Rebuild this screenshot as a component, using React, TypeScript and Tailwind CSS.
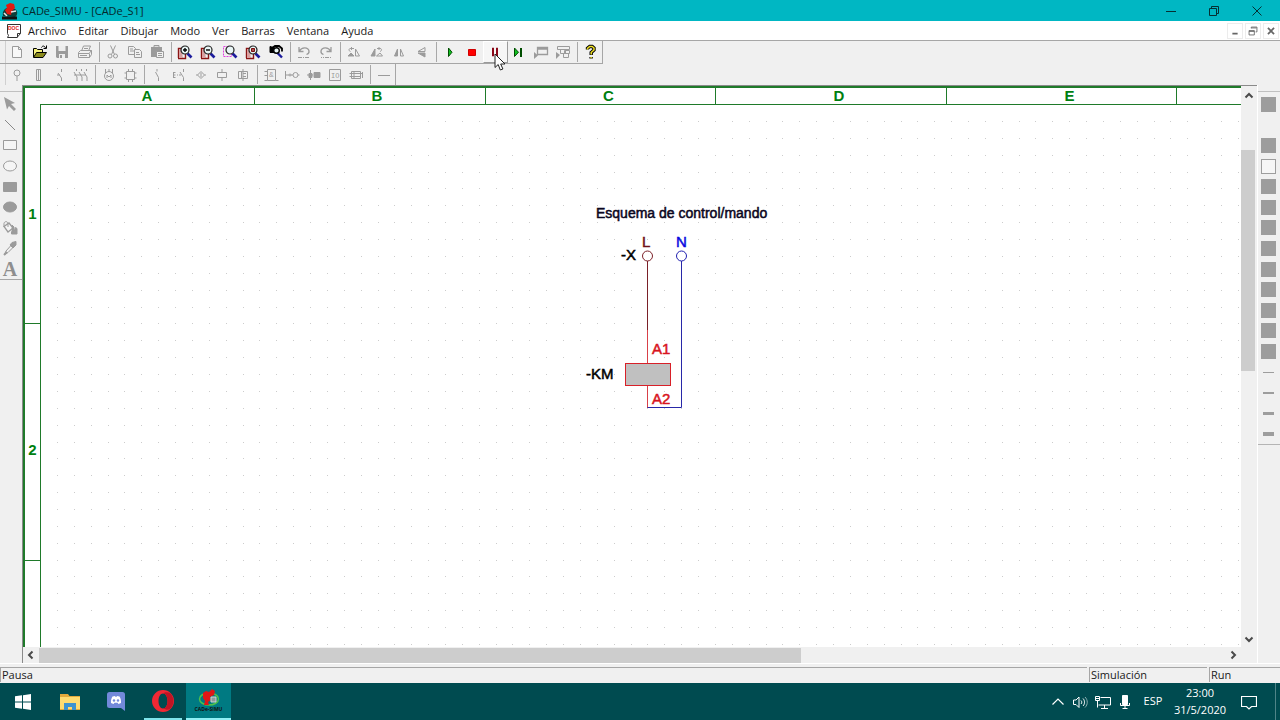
import type { ReactNode } from "react";

const menus = ["Archivo", "Editar", "Dibujar", "Modo", "Ver", "Barras", "Ventana", "Ayuda"];

const GREY = "#9b9b9b";

function Icon({ children, stroke = GREY, size = 16 }: { children: ReactNode; stroke?: string; size?: number }) {
    return (
        <svg
            width={size}
            height={size}
            viewBox="0 0 16 16"
            fill="none"
            stroke={stroke}
            strokeWidth="1"
            className="shrink-0"
            aria-hidden="true"
        >
            {children}
        </svg>
    );
}

function ZoomIcon({ door, children }: { door?: boolean; children?: ReactNode }) {
    return (
        <Icon stroke="#000">
            {door && <path d="M1.5 14V4.5h5M1 14.5h7.5V9M4.5 14V8" stroke="#8a1414" strokeWidth="1.4" />}
            {door && <path d="M2 5h3v9H2z" fill="#d9a0a0" stroke="none" />}
            {!door && <path d="M1.5 2.5h8v10h-8z" stroke="#e040e0" strokeDasharray="2 1" />}
            <path d="M10.5 9.5l4 4" stroke="#1c1c9c" strokeWidth="2.6" />
            <circle cx="8" cy="6" r="4" fill="#e8f6f6" stroke="#222" strokeWidth="1.2" />
            {children}
        </Icon>
    );
}

const fileTools = [
    {
        label: "Nuevo",
        icon: <Icon><path d="M3.5 2.5h6l3 3v8h-9zM9.5 2.5v3h3" fill="#f8f8f8" /></Icon>,
    },
    {
        label: "Abrir",
        icon: (
            <Icon stroke="#000">
                <path d="M1.5 13V4.5h3l1 1h5v3" fill="#f3ef7a" />
                <path d="M1.5 13.5l3-5h10l-3.5 5z" fill="#8b8b1c" />
                <path d="M9.5 3.5c1-2 3-2 4 .5M14.5 1.5v3h-3" />
            </Icon>
        ),
    },
    {
        label: "Guardar",
        icon: (
            <Icon>
                <path d="M2 2h12v12H3l-1-1z" fill={GREY} stroke="none" />
                <path d="M4.5 2h7v5h-7zM5 10h6v4H5z" fill="#eee" stroke="none" />
                <path d="M6 11h2v3H6z" fill={GREY} stroke="none" />
            </Icon>
        ),
    },
    {
        label: "Imprimir",
        icon: (
            <Icon>
                <path d="M4.5 7l2-5h7l-2 5M1.5 8.5l2-2h11v4l-2 3h-11zM1.5 9.5h10.5l2.5-3M12.5 9.5v4M3 11.5h7M7 4.5h4" />
            </Icon>
        ),
    },
];

const editTools = [
    {
        label: "Cortar",
        icon: (
            <Icon>
                <path d="M5.5 1.5l4 9M10.5 1.5l-4 9" />
                <circle cx="5" cy="12" r="2" />
                <circle cx="10.5" cy="12" r="2" />
            </Icon>
        ),
    },
    {
        label: "Copiar",
        icon: (
            <Icon>
                <path d="M1.5 2.5h5l2 2v6h-7zM3 5h3M3 7h4" />
                <path d="M7.5 5.5h5l2 2v6h-7z" fill="#f0f0f0" />
                <path d="M9 8.5h3M9 10.5h4" />
            </Icon>
        ),
    },
    {
        label: "Pegar",
        icon: (
            <Icon>
                <path d="M2 3h11v10H2z" fill={GREY} stroke="none" />
                <path d="M5 1.5h5v2H5z" fill="#ddd" />
                <path d="M7.5 7.5h7v6h-7z" fill="#f0f0f0" />
                <path d="M9 9.5h4M9 11.5h4" />
            </Icon>
        ),
    },
];

const zoomTools = [
    { label: "Acercar", icon: <ZoomIcon door><path d="M6 6h4M8 4v4" strokeWidth="1.4" /></ZoomIcon> },
    { label: "Alejar", icon: <ZoomIcon door><path d="M6 6h4" strokeWidth="1.4" /></ZoomIcon> },
    { label: "Zoom ventana", icon: <ZoomIcon /> },
    {
        label: "Zoom hoja",
        icon: <ZoomIcon door><path d="M6.5 4.5h3v3h-3z" fill="#b05050" stroke="#7a1010" /></ZoomIcon>,
    },
    {
        label: "Zoom anterior",
        icon: (
            <Icon stroke="#000">
                <path d="M9.5 9l4.5 4.500" stroke="#1c1c9c" strokeWidth="2.4" />
                <path d="M2 2.500v6h5L5 6.500l2-2.500z" fill="#000" />
                <path d="M4 4l3-2h4l3 2.500v3" strokeWidth="1.800" />
                <circle cx="8.500" cy="6.500" r="2.800" fill="#e8f6f6" strokeWidth="1.400" />
            </Icon>
        ),
    },
];

const undoTools = [
    {
        label: "Deshacer",
        icon: <Icon><path d="M3 3v4.500h4.500M3.500 7c2-4 8.500-4.500 9.500 0 .3 2-1 3-2.500 3.500" strokeWidth="1.300" /><path d="M2 13.500h11" strokeDasharray="4 1 1 1" /></Icon>,
    },
    {
        label: "Rehacer",
        icon: <Icon><path d="M13 3v4.500H8.500M12.500 7c-2-4-8.500-4.500-9.500 0-.3 2 1 3 2.500 3.500" strokeWidth="1.300" /><path d="M3 13.500h11" strokeDasharray="1 1 1 1 4 1" /></Icon>,
    },
];

const rotateTools = [
    {
        label: "Girar izquierda",
        icon: <Icon><path d="M9.500 12V5l4 7z" /><path d="M2 12h6L5 9z" fill={GREY} /><path d="M8 4.500H4.500c-2 0-2 2.500 0 3M6 3L4.500 4.500 6 6" /></Icon>,
    },
    {
        label: "Girar derecha",
        icon: <Icon><path d="M6 12V5l-4 7z" fill={GREY} /><path d="M7.500 12h6L11 9z" /><path d="M8 4.500h3c2 0 2 2.500 0 3M9.500 3L11 4.500 9.500 6" /></Icon>,
    },
    {
        label: "Simetría horizontal",
        icon: <Icon><path d="M6.500 12V5l-3 7z" fill={GREY} /><path d="M9.500 12V5l3 7z" /></Icon>,
    },
    {
        label: "Simetría vertical",
        icon: <Icon><path d="M11 7.500V3.500l-7 4z" /><path d="M11 9v4L4 9z" fill={GREY} /></Icon>,
    },
];

const windowTools = [
    {
        label: "Ventana de simulación",
        icon: <Icon><path d="M4.500 3.500h10v7h-10zM4 5h11" strokeWidth="1.300" /><path d="M1 8l4 3.500L1 15z" fill={GREY} stroke="none" /></Icon>,
    },
    {
        label: "Ventanas en cascada",
        icon: <Icon><path d="M2.500 2.500h12v3h-12zM5.500 5.500h5v4h-5zM9.500 6.500h5v3h-5zM8.500 9.500h5v4h-5z" /><path d="M1 8l4 3-4 4z" fill={GREY} stroke="none" /></Icon>,
    },
];

const symbolGroups = [
    {
        width: "w-[86px]",
        tools: [
            { label: "Alimentación", icon: <Icon><circle cx="8" cy="6" r="3" /><path d="M8 9v5" /></Icon> },
            { label: "Fusible", icon: <Icon><path d="M6.500 2.500h4v11h-4zM8.500 2v12" /></Icon> },
            { label: "Interruptor", icon: <Icon><path d="M9.500 2v3M6 6l3.500 5v3M5 8h3" /></Icon> },
            { label: "Contactos de potencia", icon: <Icon><path d="M3.500 2v2M1 5l3 5v4M8.500 2v2M6 5l3 5v4M13.500 2v2M11 5l3 5v4M1 8h12" /></Icon> },
        ],
    },
    {
        width: "w-[43px]",
        tools: [
            { label: "Motor", icon: <Icon><circle cx="8" cy="9" r="4.500" /><path d="M4.500 2v4M8 2v2.500M11.500 2v4M6 11V8l2 2 2-2v3" /></Icon> },
            { label: "Electrónica", icon: <Icon><path d="M4.500 4.500h8v8h-8zM6.500 2v2.500M10.500 2v2.500M6.500 12.500V15M10.500 12.500V15M2.500 6h2M2.500 11h2M12.500 6h2M12.500 11h2" /></Icon> },
        ],
    },
    {
        width: "w-[107px]",
        tools: [
            { label: "Contacto", icon: <Icon><path d="M8.500 14v-3.500L5.500 5M7 2v2.500" /></Icon> },
            { label: "Pulsador", icon: <Icon><path d="M12.500 14v-3.500L9 5M12.500 2v3M2.500 5.500v5M2 5.500h2.500M2 8h2.500M6 8h1M8 8h2M2 10.500h2.500" /></Icon> },
            { label: "Sensor", icon: <Icon><path d="M8 4.500L11.500 8 8 11.500 4.500 8zM3 8h1.500M11.500 8H13M8 6v4" /></Icon> },
            { label: "Bobina", icon: <Icon><path d="M3.500 5.500h9v5h-9zM8 2v3.500M8 10.500V14" /></Icon> },
            { label: "Bobina temporizada", icon: <Icon><path d="M3.500 4.500h9v7h-9zM6.500 4.500v7M8 2v12M8 6.500h3M8 9.500h3" /></Icon> },
        ],
    },
    {
        width: "w-[107px]",
        tools: [
            {
                label: "Puertas lógicas",
                icon: (
                    <Icon>
                        <path d="M4.500 2.500h8v11h-8zM1.500 4.500h3M1.500 8.500h3M1.500 13.500h3M12.500 13.500h3" />
                        <text x="6" y="10" fontSize="7" fill={GREY} stroke="none" fontFamily="Liberation Sans, sans-serif">&amp;</text>
                    </Icon>
                ),
            },
            { label: "Conector", icon: <Icon><circle cx="11.500" cy="8" r="2.500" /><circle cx="6" cy="8" r="1" /><path d="M1.500 4v8M1.500 8H5M7 8h2M14 8h1.500" /></Icon> },
            { label: "Válvula", icon: <Icon><path d="M1 8h6M4.500 3v10" /><path d="M3 6.500h3v4H3zM8 5.500h6v5H8z" fill={GREY} /></Icon> },
            {
                label: "Entradas y salidas",
                icon: (
                    <Icon>
                        <path d="M2.500 2.500h11v11h-11z" />
                        <text x="4" y="11" fontSize="7" fill={GREY} stroke="none" fontFamily="Liberation Mono, monospace">IO</text>
                    </Icon>
                ),
            },
            { label: "Cilindro", icon: <Icon><path d="M3.500 4.500h9v7h-9zM1.500 6.500h13M1.500 9.500h11M14.500 5v6M6 4.500v7" /></Icon> },
        ],
    },
    {
        width: "w-[22px]",
        tools: [{ label: "Cable", icon: <Icon><path d="M2 8.500h12" /></Icon> }],
    },
];

const drawTools = [
    { label: "Seleccionar", icon: <Icon><path d="M2 1l11 6-4 1 5 5-2 2-5-5-2 3.500z" fill={GREY} stroke="none" /></Icon> },
    { label: "Línea", icon: <Icon stroke="#888"><path d="M3 3l10 10" /></Icon> },
    { label: "Rectángulo", icon: <Icon><path d="M1.500 3.500h13v9h-13z" fill="#f5f5f5" /></Icon> },
    { label: "Elipse", icon: <Icon><ellipse cx="8" cy="8" rx="6.500" ry="5" fill="#f5f5f5" /></Icon> },
    { label: "Rectángulo relleno", icon: <Icon><path d="M1.500 3.500h13v9h-13z" fill={GREY} /></Icon> },
    { label: "Elipse rellena", icon: <Icon><ellipse cx="8" cy="8" rx="6.500" ry="5" fill={GREY} /></Icon> },
    {
        label: "Color de relleno",
        icon: (
            <Icon>
                <path d="M2 6.500l5-3.500 4 5-5 4z" fill="#f5f5f5" strokeWidth="1.300" />
                <path d="M2 7V3.500C2.500 1 5.500 1 6 3.500V7" />
                <path d="M10 5l2 2v5l1.500-4.500 1.500 1V14H9.500v-2.500" fill={GREY} />
            </Icon>
        ),
    },
    {
        label: "Color de línea",
        icon: <Icon><path d="M10 2.500l4-1v3.500l-3 3-3-3z" fill={GREY} /><path d="M8.500 6L4 11l-1.500 3.500L6 12.500 10.500 8" /><path d="M2 15l3-3" strokeWidth="2" /></Icon>,
    },
    { label: "Texto", text: "A" },
];

const swatches = [
    "solid", "none", "solid", "open", "solid", "solid", "solid", "solid", "solid",
    "solid", "solid", "solid", "solid", "line1", "line2", "line3", "line4",
];

const swatchStyles: Record<string, string> = {
    none: "size-[15px]",
    solid: "size-[15px] bg-[#9d9d9d]",
    open: "size-[15px] border border-[#9d9d9d] bg-[#f6f6f6]",
    line1: "w-[11px] h-px bg-[#9d9d9d]",
    line2: "w-[11px] h-[2px] bg-[#9d9d9d]",
    line3: "w-[11px] h-[3px] bg-[#9d9d9d]",
    line4: "w-[11px] h-1 bg-[#9d9d9d]",
};

// Sheet zones
const columns = [
    { name: "A", style: "w-[215px]" },
    { name: "B", style: "w-[231px] pl-3.5" },
    { name: "C", style: "w-[230px] pl-4" },
    { name: "D", style: "w-[231px] pl-4" },
    { name: "E", style: "w-[230px] pl-4" },
];

// Snap grid, one path so the DOM stays small
const gridStep = 16.87;
let gridPath = "";
for (let row = 0; row < 60; row++) {
    for (let col = 0; col < 150; col++) {
        gridPath += `M${Math.round(16 + col * gridStep)} ${Math.round(16 + row * gridStep)}h1v1h-1z`;
    }
}

function ToolButton({ label, children }: { label: string; children: ReactNode }) {
    return (
        <button type="button" aria-label={label} className="flex-1 flex items-center justify-center">
            {children}
        </button>
    );
}

function Separator() {
    return (
        <div className="w-1.5 flex justify-center py-px">
            <div className="w-px bg-[#a8a8a8]" />
        </div>
    );
}

function ToolGroup({ width, tools }: { width: string; tools: { label: string; icon: ReactNode }[] }) {
    return (
        <div className={`flex ${width}`}>
            {tools.map((tool) => (
                <ToolButton key={tool.label} label={tool.label}>{tool.icon}</ToolButton>
            ))}
        </div>
    );
}

function TitleBar() {
    return (
        <header className="h-[21px] shrink-0 flex items-center pr-0.5 bg-[#00b7c3] text-[#06282b]">
            <svg width="18" height="18" viewBox="0 0 18 18" className="ml-px mr-[3px]" aria-hidden="true">
                <path d="M2 14c-1-4 1-7 4-8l8 1c3 2 3 6 0 8z" fill="#0d3f3a" />
                <path d="M5 3l4-2 4 1 1 4-3 3-1 4-4-1-2-4 2-2z" fill="#e01b12" />
                <path d="M10 10l5-1M3 11l3 3" stroke="#e8e8e8" strokeWidth="1.5" />
                <path d="M1 16h15" stroke="#111" strokeWidth="3" />
            </svg>
            <h1 className="flex-1">CADe_SIMU - [CADe_S1]</h1>
            <button type="button" aria-label="Minimizar" className="w-[43px] h-full flex items-center justify-center">
                <Icon stroke="#053033"><path d="M3 8.5h10" /></Icon>
            </button>
            <button type="button" aria-label="Restaurar" className="w-[43px] h-full flex items-center justify-center">
                <Icon stroke="#053033"><path d="M3.500 5.500h7v7h-7zM5.500 5.500v-2h7v7h-2" /></Icon>
            </button>
            <button type="button" aria-label="Cerrar" className="w-[43px] h-full flex items-center justify-center">
                <Icon stroke="#053033"><path d="M3.500 3.500l9 9M12.500 3.500l-9 9" /></Icon>
            </button>
        </header>
    );
}

function MenuBar() {
    return (
        <nav className="h-5 shrink-0 flex items-center bg-white border-b border-[#a6a6a6]">
            <svg width="16" height="16" viewBox="0 0 16 16" className="ml-1.5 mr-1.5" aria-hidden="true">
                <path d="M1.500 1.500h13v9l-3.500 4h-9.500l1-2-1-2z" fill="#fff" stroke="#333" />
                <path d="M14.500 10.500h-3v4" fill="none" stroke="#333" />
                <text x="2" y="7" fontSize="5" fontWeight="bold" fill="#d22" fontFamily="Liberation Sans, sans-serif">DOC</text>
            </svg>
            <div className="flex-1 flex gap-3">
                {menus.map((menu) => (
                    <button key={menu} type="button">{menu}</button>
                ))}
            </div>
            <div className="flex gap-0.5 pr-px">
                <button type="button" aria-label="Minimizar documento" className="size-4 border border-[#ececec]">
                    <Icon size={14} stroke="#666"><path d="M5 11h6" strokeWidth="2" /></Icon>
                </button>
                <button type="button" aria-label="Restaurar documento" className="size-4 border border-[#ececec]">
                    <Icon size={14} stroke="#666"><path d="M3.500 7.500h6v5h-6zM6 5V3.500h6.500V9H11M3.500 8.500h6M6 4.500h6" /></Icon>
                </button>
                <button type="button" aria-label="Cerrar documento" className="size-4 border border-[#ececec]">
                    <Icon size={14} stroke="#666"><path d="M4.500 4.500l7 7M11.500 4.500l-7 7" strokeWidth="2" /></Icon>
                </button>
            </div>
        </nav>
    );
}

function MainToolbar() {
    return (
        <div className="h-[23px] shrink-0 flex">
            <div className="flex pl-[5px] border-b border-r border-[#a6a6a6]">
                <div className="w-px bg-white border-r border-[#d0d0d0]" />
                <ToolGroup width="w-[90px]" tools={fileTools} />
                <Separator />
                <ToolGroup width="w-[66px]" tools={editTools} />
                <Separator />
                <ToolGroup width="w-[113px]" tools={zoomTools} />
                <Separator />
                <ToolGroup width="w-[44px]" tools={undoTools} />
                <Separator />
                <ToolGroup width="w-[90px]" tools={rotateTools} />
                <Separator />
                <div className="flex w-[135px]">
                    <ToolButton label="Simular">
                        <Icon stroke="#004d00"><path d="M6.500 4v8.500l3.500-4.250z" fill="#10c020" /></Icon>
                    </ToolButton>
                    <ToolButton label="Detener">
                        <Icon stroke="#d00000"><path d="M4.500 5.500h7v6h-7z" fill="#ff0000" /></Icon>
                    </ToolButton>
                    <button
                        type="button"
                        aria-label="Pausa"
                        className="relative flex-1 flex items-center justify-center bg-[#f6f6f6] border border-t-white border-l-white border-r-[#9a9a9a] border-b-[#9a9a9a]"
                    >
                        <Icon stroke="#8a0818"><path d="M5.500 4h1v8h-1zM9.500 4h1v8h-1z" fill="#e02030" /></Icon>
                        <svg width="12" height="18" viewBox="0 0 12 18" className="absolute left-[10px] top-[11px] z-10" aria-hidden="true">
                            <path d="M1 1v13.500l3.200-3L6.300 17l2.600-1-2.200-5H11z" fill="#fff" stroke="#222" />
                        </svg>
                    </button>
                    <ToolButton label="Paso a paso">
                        <Icon stroke="#004d00"><path d="M3.500 4v8.500l4-4.250z" fill="#10c020" /><path d="M10 4v9" strokeWidth="2" /></Icon>
                    </ToolButton>
                    {windowTools.map((tool) => (
                        <ToolButton key={tool.label} label={tool.label}>{tool.icon}</ToolButton>
                    ))}
                </div>
                <Separator />
                <div className="flex w-[22px]">
                    <ToolButton label="Ayuda">
                        <Icon stroke="#000">
                            <path d="M4.500 5.500V4.300l2.200-1.800h2.500L11 4v2L8.200 8.500V11M8.100 13v1.500" strokeWidth="3.400" />
                            <path d="M4.500 5.500V4.300l2.200-1.800h2.500L11 4v2L8.200 8.500V10.500M8.100 13v1.200" stroke="#f0e020" strokeWidth="1.500" />
                        </Icon>
                    </ToolButton>
                </div>
            </div>
        </div>
    );
}

function SymbolToolbar() {
    return (
        <div className="h-[21px] shrink-0 flex">
            <div className="flex pl-[5px] border-r border-[#a6a6a6]">
                <div className="w-px bg-white border-r border-[#d0d0d0]" />
                {symbolGroups.map((group, i) => (
                    <div key={i} className="flex">
                        {i > 0 && <Separator />}
                        <ToolGroup width={group.width} tools={group.tools} />
                    </div>
                ))}
            </div>
        </div>
    );
}

function Schematic() {
    return (
        <svg className="w-full h-full" fontFamily="Liberation Sans, Arial, sans-serif" fontSize="15">
            <path d={gridPath} fill="#cccccc" shapeRendering="crispEdges" />
            <g transform="translate(-41 -105)" strokeWidth="0.5">
                <text x="596" y="218" fontSize="14" fill="#0a0520" stroke="#0a0520">Esquema de control/mando</text>
                <text x="642" y="247" fill="#701018" stroke="#701018">L</text>
                <text x="676" y="247" fill="#0a0ae0" stroke="#0a0ae0">N</text>
                <text x="621" y="260" fill="#000" stroke="#000">-X</text>
                <text x="586" y="379" fill="#000" stroke="#000">-KM</text>
                <text x="652" y="354" fill="#d81420" stroke="#d81420">A1</text>
                <text x="652" y="404" fill="#d81420" stroke="#d81420">A2</text>
            </g>
            <g transform="translate(-41 -105)" fill="none">
                <path d="M647.5 261v69" stroke="#7a2028" />
                <path d="M647.5 330v33M647.5 386v22" stroke="#d84048" />
                <path d="M681.500 261v146.500h-34" stroke="#2828a8" />
                <circle cx="647.500" cy="256" r="5" fill="#fff" stroke="#7c2028" />
                <circle cx="681.500" cy="256" r="5" fill="#fff" stroke="#2020b0" />
                <rect x="625.500" y="363.500" width="45" height="22" fill="#c0c0c0" stroke="#d82028" />
            </g>
        </svg>
    );
}

function Sheet() {
    return (
        <div className="min-w-0 min-h-0 flex flex-col overflow-hidden bg-white border-t-2 border-l-2 border-[#1f7a2a]">
            <div className="h-[17px] shrink-0 flex pl-[15px] text-[15px] leading-4 font-bold text-[#007f10]">
                {columns.map((column) => (
                    <div key={column.name} className={`shrink-0 text-center border-b border-r border-[#1f7a2a] ${column.style}`}>
                        {column.name}
                    </div>
                ))}
                <div className="flex-1 border-b border-[#1f7a2a]" />
            </div>
            <div className="flex-1 min-h-0 flex">
                <div className="w-4 shrink-0 flex flex-col overflow-hidden border-r border-[#1f7a2a] text-[15px] font-bold text-[#007f10]">
                    <div className="h-[219px] shrink-0 flex items-center justify-center border-b border-[#1f7a2a]">1</div>
                    <div className="h-[237px] shrink-0 flex items-center justify-center pt-4 border-b border-[#1f7a2a]">2</div>
                </div>
                <div className="flex-1 min-w-0 overflow-hidden">
                    <Schematic />
                </div>
            </div>
        </div>
    );
}

function ScrollArrow({ label, d }: { label: string; d: string }) {
    return (
        <button type="button" aria-label={label} className="size-4 shrink-0 flex items-center justify-center">
            <Icon stroke="#4a4a4a"><path d={d} strokeWidth="2" /></Icon>
        </button>
    );
}

function Workspace() {
    return (
        <main className="flex-1 min-h-0 flex">
            <aside className="w-[22px] shrink-0 pt-1.5">
                <div className="h-[189px] border-t border-b border-t-[#c0c0c0] border-b-[#a6a6a6] flex flex-col pt-0.5 pr-0.5">
                    {drawTools.map((tool) => (
                        <button key={tool.label} type="button" aria-label={tool.label} className="flex-1 min-h-0 flex items-center justify-center">
                            {tool.icon ?? (
                                <span className="font-['Liberation_Serif',serif] font-bold text-xl leading-5 text-[#8e8e8e]">{tool.text}</span>
                            )}
                        </button>
                    ))}
                </div>
            </aside>

            <div className="flex-1 min-w-0 grid grid-cols-[minmax(0,1fr)_16px] grid-rows-[minmax(0,1fr)_16px] border-t border-l border-[#8a8a8a]">
                <Sheet />
                <div className="flex flex-col items-center pt-0.5 bg-[#f0f0f0]">
                    <ScrollArrow label="Subir" d="M4.500 9.500L8 6l3.500 3.500" />
                    <div className="flex-1 w-full flex flex-col">
                        <div className="flex-[46]" />
                        <div className="flex-[221] w-[14px] bg-[#cdcdcd]" />
                        <div className="flex-[260]" />
                    </div>
                    <ScrollArrow label="Bajar" d="M4.500 6.500L8 10l3.500-3.500" />
                </div>
                <div className="flex items-center bg-[#f0f0f0]">
                    <ScrollArrow label="Izquierda" d="M9.500 4.500L6 8l3.500 3.500" />
                    <div className="flex-1 flex h-[15px]">
                        <div className="flex-[761] bg-[#cdcdcd]" />
                        <div className="flex-[424]" />
                    </div>
                    <ScrollArrow label="Derecha" d="M6.500 4.500L10 8l-3.500 3.500" />
                </div>
                <div className="bg-[#f0f0f0]" />
            </div>

            <aside className="w-[23px] shrink-0 border-l border-white pt-1.5">
                <div className="h-[354px] border-t border-b border-t-[#c0c0c0] border-b-[#b4b4b4] flex flex-col pt-0.5 pr-0.5">
                    {swatches.map((kind, i) => (
                        <button key={i} type="button" aria-label={`Color ${i + 1}`} className="flex-1 min-h-0 flex items-center justify-center">
                            <span className={swatchStyles[kind]} />
                        </button>
                    ))}
                </div>
            </aside>
        </main>
    );
}

function StatusBar() {
    return (
        <div className="h-5 shrink-0 flex gap-0.5 pt-[3px] pb-px border-t border-white">
            <div className="flex-1 flex items-center pl-px border-t border-l border-[#a6a6a6]">Pausa</div>
            <div className="w-[118px] flex items-center pl-px border-t border-l border-[#a6a6a6]">Simulación</div>
            <div className="w-[71px] flex items-center pl-px border-t border-l border-[#a6a6a6]">Run</div>
        </div>
    );
}

function Taskbar() {
    return (
        <footer className="h-[37px] shrink-0 flex items-stretch bg-[#004b50] text-white">
            <button type="button" aria-label="Inicio" className="w-[46px] flex items-center justify-center">
                <svg width="16" height="16" viewBox="0 0 16 16" fill="#fff" aria-hidden="true">
                    <path d="M0 2.300l7-1v6.200H0zM8 1.200L16 0v7.500H8zM0 8.500h7v6.200l-7-1zM8 8.500h8V16l-8-1.200z" />
                </svg>
            </button>
            <button type="button" aria-label="Explorador de archivos" className="w-[47px] flex items-center justify-center">
                <svg width="20" height="18" viewBox="0 0 20 18" aria-hidden="true">
                    <path d="M0 1h8l1.500 2H20v14H0z" fill="#e3a93c" />
                    <path d="M0 4h20v12H0z" fill="#ffdb70" />
                    <path d="M4 17v-7h12v7h-4v-3H8v3z" fill="#3f93cf" />
                </svg>
            </button>
            <button type="button" aria-label="Discord" className="w-[46px] flex items-center justify-center">
                <svg width="18" height="19" viewBox="0 0 18 19" aria-hidden="true">
                    <path d="M2.500 0h13A2.500 2.500 0 0 1 18 2.500V19l-4-3H2.500A2.500 2.500 0 0 1 0 13.500v-11A2.500 2.500 0 0 1 2.500 0z" fill="#7289da" />
                    <path d="M5.500 4.500L8 4l.3.700h1.400L10 4l2.500.5c1.200 2 1.700 4 1.500 6.500l-2.500 1-1-1.200h-3l-1 1.200L4 11c-.2-2.500.3-4.500 1.500-6.500z" fill="#fff" />
                    <circle cx="7" cy="8.500" r="1.200" fill="#7289da" />
                    <circle cx="11" cy="8.500" r="1.200" fill="#7289da" />
                </svg>
            </button>
            <button type="button" aria-label="Opera" className="w-[47px] flex flex-col items-center">
                <span className="flex-1 flex items-center">
                    <svg width="22" height="22" viewBox="0 0 22 22" aria-hidden="true">
                        <path d="M11 0a11 11 0 1 0 0 22 11 11 0 0 0 0-22zm0 3.500c2.700 0 4.500 3.200 4.500 7.500s-1.800 7.500-4.500 7.500S6.500 15.300 6.500 11 8.300 3.500 11 3.500z" fill="#f02834" fillRule="evenodd" />
                        <path d="M11 3.500c2 -1.500 5-1.500 7 -.500a11 11 0 0 1 0 16c-2 1-5 1-7-.500 2.700 0 4.500-3.200 4.500-7.500S13.700 3.500 11 3.500z" fill="#c01424" />
                    </svg>
                </span>
                <span className="w-[38px] h-0.5 bg-[#7fe3ea]" />
            </button>
            <button type="button" aria-label="CADe_SIMU" className="w-[45px] flex flex-col items-center bg-[#007a82]">
                <span className="flex-1 flex flex-col items-center justify-center">
                    <svg width="24" height="17" viewBox="0 0 24 17" aria-hidden="true">
                        <ellipse cx="12" cy="10" rx="9.500" ry="6" fill="none" stroke="#4fc04a" strokeWidth="1.500" />
                        <path d="M6 4l3-2 3 1 3-3 3 2-1 4-4 2 1 3-3 2 1 3H7l1-4-2-3z" fill="#e01616" />
                        <path d="M14 8h5v5h-5z" fill="#8d9a9c" stroke="#ccd6d6" />
                    </svg>
                    <span className="text-[5px] leading-[6px] font-bold text-[#111]">CADe-SIMU</span>
                </span>
                <span className="w-full h-0.5 bg-[#8ff0f5]" />
            </button>

            <div className="flex-1" />

            <button type="button" aria-label="Mostrar iconos ocultos" className="w-[22px] flex items-center justify-center">
                <Icon stroke="#fff"><path d="M2.500 10.500L8 5l5.500 5.500" strokeWidth="1.200" /></Icon>
            </button>
            <button type="button" aria-label="Volumen" className="w-[22px] flex items-center justify-center">
                <Icon stroke="#fff"><path d="M1.500 6v4.500H4l3 3V3L4 6zM9 6.500c1 1 1 2.500 0 3.500M11 4.500c2 2 2 5.500 0 7.500" /><path d="M13 3c3 3 3 7.500 0 10.500" stroke="#8fb0b2" /></Icon>
            </button>
            <button type="button" aria-label="Red" className="w-[24px] flex items-center justify-center">
                <Icon stroke="#fff"><path d="M5.500 3.500h10v7.500H3.500M9.500 11v3M6 14.500h7M.500 2.500h4v4h-4zM2.500 6.500v7M1 4.500h3" /></Icon>
            </button>
            <button type="button" aria-label="Micrófono" className="w-[20px] flex items-center justify-center">
                <Icon stroke="#fff"><path d="M5.500 1.500h5v9h-5z" fill="#fff" /><path d="M3.500 9v2.500h9V9M8 12v3M5.500 14.500h5" /></Icon>
            </button>
            <button type="button" className="w-[36px] pb-0.5 text-[11px]">ESP</button>
            <button type="button" className="w-[58px] pb-0.5 text-[11px] leading-[17px]">
                23:00
                <br />
                31/5/2020
            </button>
            <button type="button" aria-label="Notificaciones" className="w-[40px] flex items-center justify-center">
                <Icon stroke="#fff"><path d="M.500 2.500h15v10h-5L8 15l-2.500-2.500h-5z" strokeWidth="1.200" /></Icon>
            </button>
            <button type="button" aria-label="Mostrar escritorio" className="w-[11px] flex justify-end pr-1">
                <span className="w-px h-full bg-[#4f8488]" />
            </button>
        </footer>
    );
}

export default function App() {
    return (
        <div className="h-screen flex flex-col overflow-hidden bg-[#f0f0f0] font-['Open_Sans','Noto_Sans',sans-serif] text-[11px] leading-4 text-[#1a1a1a]">
            <TitleBar />
            <MenuBar />
            <MainToolbar />
            <SymbolToolbar />
            <div className="contents font-['Liberation_Sans',Arial,sans-serif]">
                <Workspace />
            </div>
            <StatusBar />
            <Taskbar />
        </div>
    );
}
